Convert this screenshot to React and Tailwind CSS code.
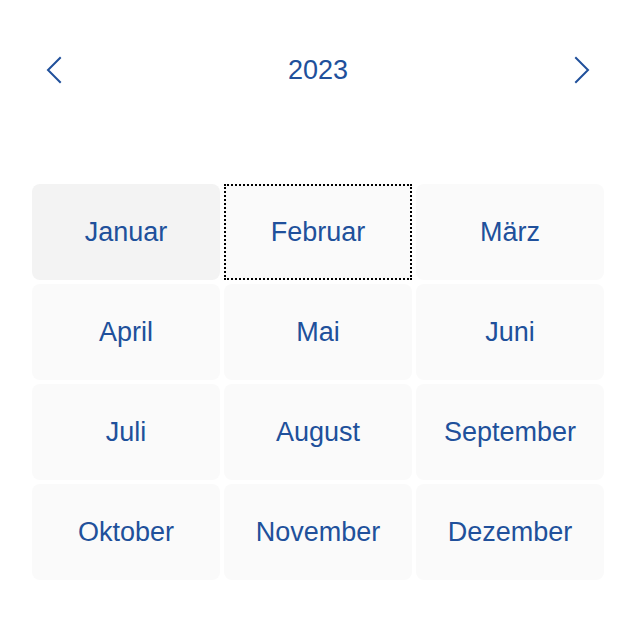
const months = [
  'Januar', 'Februar', 'März',
  'April', 'Mai', 'Juni',
  'Juli', 'August', 'September',
  'Oktober', 'November', 'Dezember',
];

const Chevron = ({ dir }) => (
  <svg width="16" height="28" viewBox="0 0 16 28" fill="none" stroke="currentColor" strokeWidth="2" strokeLinecap="square">
    {dir === 'left' ? <polyline points="14,2 2,14 14,26" /> : <polyline points="2,2 14,14 2,26" />}
  </svg>
);

export default function App() {
  return (
    <div className="w-[634px] h-[632px] bg-white text-[#20509b]" style={{ fontFamily: '"Liberation Sans", Arial, sans-serif' }}>
      <div className="pt-[40px] pl-[32px] w-[604px]">
        <div className="h-[60px] flex items-center justify-between px-[14px]">
          <button className="flex items-center justify-center"><Chevron dir="left" /></button>
          <span className="text-[27px]">2023</span>
          <button className="flex items-center justify-center"><Chevron dir="right" /></button>
        </div>
        <div className="mt-[84px] grid grid-cols-3 gap-[4px]">
          {months.map((m, i) => (
            <div
              key={m}
              className={
                'h-[96px] flex items-center justify-center text-[27px] ' +
                (i === 0 ? 'bg-[#f3f3f3] rounded-lg' : i === 1 ? 'bg-[#fafafa] border-2 border-dotted border-black' : 'bg-[#fafafa] rounded-lg')
              }
            >
              {m}
            </div>
          ))}
        </div>
      </div>
    </div>
  );
}
